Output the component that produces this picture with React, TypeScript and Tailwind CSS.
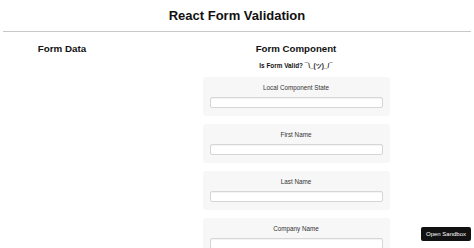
const fields = ["Local Component State", "First Name", "Last Name", "Company Name"];

function Field({ label }: { label: string }) {
  return (
    <div className="w-[187px] rounded-[3px] bg-[#f7f7f7] px-[7px] pt-[7px] pb-[8px]">
      <div className="text-center text-[6.3px] leading-[8px] text-[#333]">{label}</div>
      <input
        type="text"
        className="mt-[5px] block h-[11px] w-full rounded-[2px] border border-[#d6d6d6] bg-white shadow-[inset_0_1px_1px_rgba(0,0,0,0.05)] outline-none"
      />
    </div>
  );
}

export default function App() {
  return (
    <div className="relative h-[248px] w-[474px] overflow-hidden bg-white font-['Liberation_Sans',Arial,sans-serif] text-[#111]">
      <h1 className="pt-[7px] text-center text-[13px] font-bold leading-[18px]">React Form Validation</h1>
      <div className="mx-[3px] mt-[6px] h-px bg-[#c8c8c8]" />
      <div className="flex">
        <div className="w-[124px] pt-[11px] text-center text-[9.8px] font-bold leading-[12px]">Form Data</div>
        <div className="flex w-[344px] flex-col items-center pt-[11px]">
          <h2 className="text-[9.7px] font-bold leading-[12px]">Form Component</h2>
          <p className="mt-[7px] text-[6.4px] font-bold leading-[8px]">Is Form Valid? ¯\_(ツ)_/¯</p>
          <div className="mt-[7px] flex flex-col gap-[8px]">
            {fields.map((f) => (
              <Field key={f} label={f} />
            ))}
          </div>
        </div>
      </div>
      <button className="absolute right-[3px] bottom-[7px] h-[14px] rounded-[2px] bg-[#111] px-[5px] text-[6px] leading-[8px] text-white">
        Open Sandbox
      </button>
    </div>
  );
}
